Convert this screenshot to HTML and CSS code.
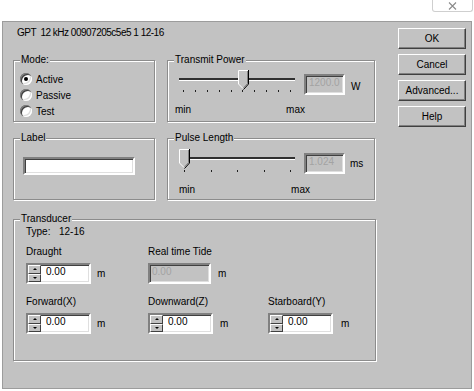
FILE: index.html
```html
<!DOCTYPE html>
<html>
<head>
<meta charset="utf-8">
<link rel="stylesheet" href="styles.css">
</head>
<body>
<div class="topbar">
  <div class="close">
    <svg width="9" height="8" viewBox="0 0 9 8"><path d="M1 0.5 L8 7.5 M8 0.5 L1 7.5" stroke="#8a8a8a" stroke-width="1.1" fill="none"/></svg>
  </div>
</div>
<div class="dialog">
  <div class="main">
    <div class="title">GPT  12 kHz 00907205c5e5 1 12-16</div>

    <div class="row row1">
      <fieldset class="group">
        <legend>Mode:</legend>
        <div class="radios">
          <div class="radio-row"><span class="radio on"></span>Active</div>
          <div class="radio-row"><span class="radio"></span>Passive</div>
          <div class="radio-row"><span class="radio"></span>Test</div>
        </div>
      </fieldset>
      <fieldset class="group">
        <legend>Transmit Power</legend>
        <div class="slider-panel tp">
          <div class="scale">
            <div class="slider">
              <div class="track"></div>
              <svg class="thumb" style="left:59px" width="11" height="20" viewBox="0 0 11 20">
                <path d="M0.5 0.5 H10.5 V14 L5.5 19.5 L0.5 14 Z" fill="#c2c2c2"/>
                <path d="M0.5 14 V0.5 H10" stroke="#fff" fill="none"/>
                <path d="M0.5 14 L5 18.5" stroke="#fff" fill="none"/>
                <path d="M10.5 0 V14 L5.5 19.5" stroke="#000" fill="none"/>
                <path d="M9.5 1 V13.6 L5.5 17.8" stroke="#808080" fill="none"/>
              </svg>
            </div>
            <div class="ticks">
              <i></i><i></i><i></i><i></i><i></i><i></i><i></i><i></i><i></i><i></i>
            </div>
            <div class="minmax"><span>min</span><span>max</span></div>
          </div>
          <div class="edit">1200.0</div>
          <div class="unit">W</div>
        </div>
      </fieldset>
    </div>

    <div class="row row2">
      <fieldset class="group">
        <legend>Label</legend>
        <div class="textbox"></div>
      </fieldset>
      <fieldset class="group">
        <legend>Pulse Length</legend>
        <div class="slider-panel pl">
          <div class="scale">
            <div class="slider">
              <div class="track"></div>
              <svg class="thumb" style="left:-1px" width="11" height="20" viewBox="0 0 11 20">
                <path d="M0.5 0.5 H10.5 V14 L5.5 19.5 L0.5 14 Z" fill="#c2c2c2"/>
                <path d="M0.5 14 V0.5 H10" stroke="#fff" fill="none"/>
                <path d="M0.5 14 L5 18.5" stroke="#fff" fill="none"/>
                <path d="M10.5 0 V14 L5.5 19.5" stroke="#000" fill="none"/>
                <path d="M9.5 1 V13.6 L5.5 17.8" stroke="#808080" fill="none"/>
              </svg>
            </div>
            <div class="ticks">
              <i></i><i></i><i></i><i></i><i></i>
            </div>
            <div class="minmax"><span>min</span><span>max</span></div>
          </div>
          <div class="edit">1.024</div>
          <div class="unit">ms</div>
        </div>
      </fieldset>
    </div>

    <fieldset class="group trans">
      <legend>Transducer</legend>
      <div class="type-row"><span class="type-key">Type:</span><span>12-16</span></div>
      <div class="tgrid">
        <div class="field">
          <div class="flabel">Draught</div>
          <div class="spinrow">
            <div class="spin">
              <div class="spinbtns"><span class="sb up"></span><span class="sb down"></span></div>
              <div class="val">0.00</div>
            </div>
            <span class="m">m</span>
          </div>
        </div>
        <div class="field">
          <div class="flabel">Real time Tide</div>
          <div class="spinrow">
            <div class="spin disabled">
              <div class="val">0.00</div>
            </div>
            <span class="m m2">m</span>
          </div>
        </div>
        <div class="field"></div>
        <div class="field">
          <div class="flabel">Forward(X)</div>
          <div class="spinrow">
            <div class="spin">
              <div class="spinbtns"><span class="sb up"></span><span class="sb down"></span></div>
              <div class="val">0.00</div>
            </div>
            <span class="m">m</span>
          </div>
        </div>
        <div class="field">
          <div class="flabel">Downward(Z)</div>
          <div class="spinrow">
            <div class="spin">
              <div class="spinbtns"><span class="sb up"></span><span class="sb down"></span></div>
              <div class="val">0.00</div>
            </div>
            <span class="m m2">m</span>
          </div>
        </div>
        <div class="field">
          <div class="flabel">Starboard(Y)</div>
          <div class="spinrow">
            <div class="spin">
              <div class="spinbtns"><span class="sb up"></span><span class="sb down"></span></div>
              <div class="val">0.00</div>
            </div>
            <span class="m m3">m</span>
          </div>
        </div>
      </div>
    </fieldset>
  </div>

  <div class="buttons">
    <button class="btn">OK</button>
    <button class="btn">Cancel</button>
    <button class="btn">Advanced...</button>
    <button class="btn">Help</button>
  </div>
</div>
</body>
</html>
```

FILE: styles.css
```css
* { box-sizing: border-box; }

body {
  margin: 0;
  width: 474px;
  height: 391px;
  overflow: hidden;
  background: #fff;
  font-family: "Liberation Sans", Arial, sans-serif;
  font-size: 10px;
  color: #000;
}

.topbar {
  height: 21px;
  display: flex;
  justify-content: flex-end;
}

.close {
  width: 41px;
  height: 12px;
  margin-right: 1px;
  border: 1px solid #cfcfcf;
  border-top: none;
  border-radius: 0 0 3px 3px;
  background: #fff;
  display: flex;
  align-items: center;
  justify-content: center;
}

.dialog {
  margin-left: 2px;
  width: 470px;
  height: 368px;
  background: #c2c2c2;
  border: 1px solid #9c9c9c;
  display: flex;
  align-items: flex-start;
  padding: 5px 0 0 10px;
}

.main {
  width: 363px;
  display: flex;
  flex-direction: column;
}

.title {
  height: 12px;
  line-height: 12px;
  padding-left: 4px;
  letter-spacing: -0.5px;
  white-space: pre;
}

.row {
  display: grid;
  grid-template-columns: 142px 208px;
  column-gap: 12px;
}

.row1 { margin-top: 15px; }
.row2 { margin-top: 10px; }

.group {
  margin: 0;
  padding: 0;
  min-width: 0;
  height: 68px;
  border: 1px solid #8c8c8c;
  box-shadow: inset 1px 1px 0 #fff, 1px 1px 0 #fff;
}

.group legend {
  margin-left: 6px;
  padding: 0 1px;
  line-height: 12px;
  background: #c2c2c2;
}

/* Mode */
.radios {
  padding: 5px 0 0 6px;
  display: flex;
  flex-direction: column;
}

.radio-row {
  height: 16px;
  display: flex;
  align-items: center;
}

.radio {
  width: 12px;
  height: 12px;
  margin-right: 4px;
  border-radius: 50%;
  background: #fff;
  box-shadow: inset 1px 1px 0 #808080, inset 2px 2px 0 #404040, inset -1px -1px 0 #fff, inset -2px -2px 0 #dcdcdc;
  display: flex;
  align-items: center;
  justify-content: center;
}

.radio.on::after {
  content: "";
  width: 4px;
  height: 4px;
  border-radius: 50%;
  background: #000;
}

/* sliders */
.slider-panel {
  display: flex;
  align-items: flex-start;
  padding-left: 7px;
}
.slider-panel.tp { padding-top: 4px; }
.slider-panel.pl { padding-top: 5px; }

.scale {
  width: 129px;
  display: flex;
  flex-direction: column;
}

.slider {
  position: relative;
  height: 20px;
}
.tp .slider { margin-left: 4px; width: 116px; }
.pl .slider { margin-left: 5px; width: 115px; }

.track {
  margin-top: 8px;
  height: 2px;
  background: #303030;
  box-shadow: 0 1px 0 #fff;
}

.thumb {
  position: absolute;
  top: 0;
}

.ticks {
  height: 2px;
  display: flex;
  justify-content: space-between;
}
.tp .ticks { margin: 0 13px 0 8px; }
.pl .ticks { margin: 1px 13px 0 9px; }

.ticks i {
  width: 1px;
  height: 2px;
  background: #202020;
}

.minmax {
  margin-top: 12px;
  line-height: 12px;
  display: flex;
  justify-content: space-between;
}
.tp .minmax { width: 130px; }
.pl .minmax { width: 131px; margin-left: 4px; }

.edit {
  margin-top: 4px;
  width: 41px;
  height: 21px;
  border: 2px solid;
  border-color: #808080 #fff #fff #808080;
  box-shadow: inset 1px 1px 0 #404040, inset -1px -1px 0 #dfdfdf;
  padding: 1px 0 0 3px;
  line-height: 12px;
  color: #a3a3a3;
  background: #c2c2c2;
}

.unit {
  margin-top: 11px;
  margin-left: 6px;
  line-height: 12px;
}
.pl .unit { margin-left: 5px; margin-top: 9px; }

/* Label */
.textbox {
  margin: 13px 0 0 9px;
  width: 112px;
  height: 18px;
  background: #fff;
  border: 2px solid;
  border-color: #808080 #fff #fff #808080;
  box-shadow: inset 1px 1px 0 #404040, inset -1px -1px 0 #dfdfdf;
}

/* Transducer */
.group.trans {
  margin-top: 13px;
  height: 148px;
  width: 363px;
}

.type-row {
  padding: 1px 0 0 12px;
  line-height: 12px;
  display: flex;
}
.type-key { width: 33px; }

.tgrid {
  margin: 8px 0 0 12px;
  display: grid;
  grid-template-columns: 122px 120px 100px;
  row-gap: 12px;
}

.flabel { line-height: 12px; }

.spinrow {
  margin-top: 5px;
  display: flex;
  align-items: center;
}

.spin {
  width: 65px;
  height: 21px;
  border: 2px solid;
  border-color: #808080 #fff #fff #808080;
  box-shadow: inset 1px 1px 0 #404040, inset -1px -1px 0 #dfdfdf;
  background: #fff;
  display: flex;
}
.spin.disabled { width: 63px; background: #c2c2c2; }

.spinbtns {
  width: 13px;
  display: flex;
  flex-direction: column;
}

.sb {
  flex: 1;
  background: #c2c2c2;
  border: 1px solid;
  border-color: #fff #404040 #404040 #fff;
  display: flex;
  align-items: center;
  justify-content: center;
}
.sb.up::after {
  content: "";
  border-left: 2px solid transparent;
  border-right: 2px solid transparent;
  border-bottom: 2px solid #000;
}
.sb.down::after {
  content: "";
  border-left: 2px solid transparent;
  border-right: 2px solid transparent;
  border-top: 2px solid #000;
}

.val {
  padding: 1px 0 0 5px;
  line-height: 12px;
}
.disabled .val { padding-left: 2px; color: #a3a3a3; }

.m { margin-left: 6px; line-height: 12px; }
.m2 { margin-left: 7px; }
.m3 { margin-left: 8px; }

/* Buttons */
.buttons {
  margin-left: 22px;
  margin-top: 1px;
  width: 68px;
  display: flex;
  flex-direction: column;
  gap: 5px;
}

.btn {
  height: 21px;
  padding: 0;
  font: inherit;
  color: #000;
  background: #c2c2c2;
  border: 1px solid;
  border-color: #fff #404040 #404040 #fff;
  box-shadow: inset -1px -1px 0 #808080;
  display: flex;
  align-items: center;
  justify-content: center;
}
```
